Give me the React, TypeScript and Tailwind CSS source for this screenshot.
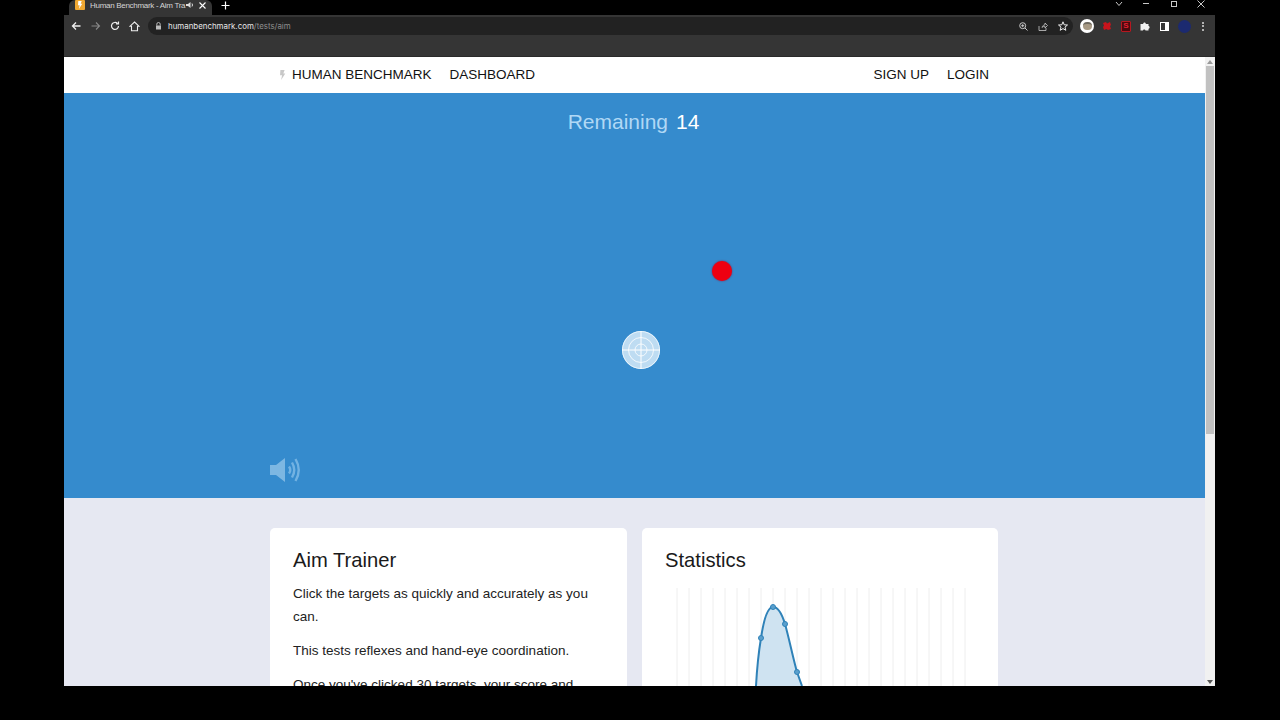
import React from "react";

const lines = Array.from({ length: 25 }, (_, i) => 23 + 12 * i);

function Target() {
  return (
    <svg width="40" height="40" viewBox="0 0 40 40" className="block">
      <circle cx="20" cy="20" r="19" fill="#bedcf2" />
      <circle cx="20" cy="20" r="18.500" fill="none" stroke="#e8f4fc" strokeWidth="1" />
      <circle cx="20" cy="20" r="12.500" fill="none" stroke="#ffffff" strokeOpacity="0.8" strokeWidth="1" />
      <circle cx="20" cy="20" r="6" fill="none" stroke="#ffffff" strokeOpacity="0.8" strokeWidth="1" />
      <path d="M1 20H39M20 1V39" stroke="#ffffff" strokeWidth="1" />
    </svg>
  );
}

function Chart() {
  return (
    <svg width="328" height="98" viewBox="0 0 328 98" className="block">
      {lines.map((x) => (
        <line key={x} x1={x} x2={x} y1="0" y2="98" stroke="#eeeeee" strokeWidth="1" />
      ))}
      <path d="M102 98 C103 80 105 62 107 50 C110 30 114 19 119 19 C124 19 128 26 131 36 C135 50 139 70 143 84 L148 98 Z" fill="#cfe3f1" />
      <path d="M102 98 C103 80 105 62 107 50 C110 30 114 19 119 19 C124 19 128 26 131 36 C135 50 139 70 143 84 L148 98" fill="none" stroke="#2f82b8" strokeWidth="2" />
      {[[107, 50], [119, 19], [131, 36], [143, 84]].map(([x, y]) => (
        <circle key={x} cx={x} cy={y} r="2.500" fill="#5a9fcd" stroke="#2f82b8" />
      ))}
    </svg>
  );
}

function Bolt({ className }: { className: string }) {
  return (
    <svg viewBox="0 0 10 14" className={className}>
      <path d="M2 0H8L6.200 5H9L3 14L4.400 7.500H1.500Z" fill="currentColor" />
    </svg>
  );
}

export default function App() {
  return (
    <div className="w-[1280px] h-[720px] bg-black pl-[64px] overflow-hidden font-['Liberation_Sans',Arial,sans-serif]">
      <div className="w-[1151px] h-[686px] flex flex-col overflow-hidden">
        {/* tab strip */}
        <div className="h-[15px] bg-black flex items-start shrink-0">
          <div className="ml-[5px] w-[143px] h-[15px] bg-[#353535] rounded-t-md flex items-start pl-[6px] pr-[4px]">
            <div className="w-[10px] h-[10px] shrink-0 bg-[#f0a832] rounded-[1px] flex items-center justify-center text-white">
              <Bolt className="w-[6px] h-[8px]" />
            </div>
            <span className="ml-[5px] w-[92px] shrink-0 text-[8px] tracking-[-0.3px] leading-[11px] text-[#d4d4d4] whitespace-nowrap">Human Benchmark - Aim Tra</span>
            <svg width="8" height="8" viewBox="0 0 8 8" className="mt-[1px] ml-[4px] shrink-0"><path d="M0 3H2L4.500 1V7L2 5H0Z" fill="#ddd" /><path d="M6 2.500Q7 4 6 5.500" stroke="#ddd" fill="none" /></svg>
            <svg width="7" height="7" viewBox="0 0 7 7" className="mt-[2px] ml-[5px] shrink-0"><path d="M0.500 0.500L6.500 6.500M6.500 0.500L0.500 6.500" stroke="#fff" strokeWidth="1.100" /></svg>
          </div>
          <svg width="9" height="9" viewBox="0 0 9 9" className="ml-[9px] mt-[1px]"><path d="M4.500 0.500V8.500M0.500 4.500H8.500" stroke="#fff" strokeWidth="1.200" /></svg>
          <div className="ml-auto mr-[10px] flex items-center text-[#c8c8c8] h-[7px]">
            <svg width="8" height="6" viewBox="0 0 8 6" className="mr-[20px]"><path d="M1 1L4 4.500L7 1" stroke="currentColor" fill="none" /></svg>
            <div className="w-[6px] h-px bg-current mr-[22px]"></div>
            <div className="w-[6px] h-[6px] border border-current mr-[20px]"></div>
            <svg width="8" height="8" viewBox="0 0 8 8"><path d="M0.500 0.500L7.500 7.500M7.500 0.500L0.500 7.500" stroke="currentColor" /></svg>
          </div>
        </div>
        {/* toolbar */}
        <div className="h-[22px] bg-[#353535] flex items-center shrink-0 pl-[7px] text-white">
          <svg width="10" height="10" viewBox="0 0 10 10"><path d="M9.500 5H1.500M5 1.500L1.500 5L5 8.500" stroke="#eee" strokeWidth="1.300" fill="none" /></svg>
          <svg width="10" height="10" viewBox="0 0 10 10" className="ml-[10px]"><path d="M0.500 5H8.500M5 1.500L8.500 5L5 8.500" stroke="#888" strokeWidth="1.100" fill="none" /></svg>
          <svg width="10" height="10" viewBox="0 0 10 10" className="ml-[9px]"><path d="M8.500 5A3.500 3.500 0 1 1 7.500 2.500M8.500 0.500V3H6" stroke="#eee" strokeWidth="1.200" fill="none" /></svg>
          <svg width="11" height="11" viewBox="0 0 11 11" className="ml-[9px]"><path d="M5.500 1L10 5.200H8.500V9.700H2.500V5.200H1Z" stroke="#eee" strokeWidth="1.100" fill="none" /></svg>
          <div className="ml-[8px] w-[925px] h-[18px] rounded-full bg-[#222222] flex items-center pl-[7px] pr-[5px]">
            <svg width="7" height="8" viewBox="0 0 7 8" className="mr-[6px]"><path d="M1.800 3.500V2.200A1.700 1.700 0 0 1 5.200 2.200V3.500" stroke="#bbb" fill="none" /><rect x="1" y="3.500" width="5" height="4" fill="#bbb" /></svg>
            <span className="mt-[1px] text-[7.900px] text-[#e8e8e8] font-['Inter',sans-serif]">humanbenchmark.com<span className="text-[#8f8f8f]">/tests/aim</span></span>
            <div className="ml-auto flex items-center gap-[10px] text-[#c8c8c8]">
              <svg width="9" height="9" viewBox="0 0 9 9"><circle cx="3.700" cy="3.700" r="3" stroke="currentColor" fill="none" /><path d="M6 6L8.500 8.500M2.200 3.700H5.200M3.700 2.200V5.200" stroke="currentColor" /></svg>
              <svg width="10" height="9" viewBox="0 0 10 9"><path d="M1 4V8.500H8V6M4 5.500C4.500 3.500 6 2.800 7 2.800V1L9.500 3.500L7 6V4.300C6 4.300 5 4.500 4 5.500Z" stroke="currentColor" strokeWidth="0.800" fill="none" /></svg>
              <svg width="10" height="10" viewBox="0 0 10 10"><path d="M5 0.800L6.200 3.800L9.500 4L7 6.100L7.800 9.300L5 7.600L2.200 9.300L3 6.100L0.500 4L3.800 3.800Z" stroke="#eee" fill="none" /></svg>
            </div>
          </div>
          <div className="ml-[7px] w-[14px] h-[14px] rounded-full bg-white flex items-center justify-center">
            <div className="w-[9px] h-[8px] rounded-full bg-[#a89a84] border-t-2 border-[#6f6a60]"></div>
          </div>
          <svg width="10" height="10" viewBox="0 0 10 10" className="ml-[8px]"><path d="M1 2L4 1L5 2.500L8 1L9 4L8 5L9 8L6 9L4.500 8L2 9L1 6L2 4.500Z" fill="#c8141c" /></svg>
          <div className="ml-[9px] w-[10px] h-[11px] rounded-[1px] bg-[#4a0a0e] border border-[#b51820] flex items-center justify-center text-[8px] leading-none text-[#e02030] font-bold">S</div>
          <svg width="10" height="10" viewBox="0 0 10 10" className="ml-[9px]"><path d="M0.500 3H3.200C3 1 6 1 5.800 3H8.500V5C10 5 10 7.800 8.500 7.800V9.500H5.500C5.500 8 3 8 3 9.500H0.500Z" fill="#f0f0f0" /></svg>
          <div className="ml-[10px] w-[9px] h-[9px] border-[1.500px] border-white flex justify-end"><div className="w-[3px] bg-white"></div></div>
          <div className="ml-[9px] w-[13px] h-[13px] rounded-full bg-[#1c2a70]"></div>
          <div className="ml-[11px] flex flex-col gap-[1.500px]">
            <div className="w-[2px] h-[2px] rounded-full bg-[#ddd]"></div>
            <div className="w-[2px] h-[2px] rounded-full bg-[#ddd]"></div>
            <div className="w-[2px] h-[2px] rounded-full bg-[#ddd]"></div>
          </div>
        </div>
        {/* bookmarks gap */}
        <div className="h-[20px] bg-[#353535] border-b border-[#2a2a2a] shrink-0"></div>

        <div className="flex flex-1 min-h-0">
          <main className="flex-1 min-w-0 overflow-hidden bg-[#e6e8f2]">
            <nav className="h-[36px] bg-white flex items-center text-[13.500px] text-[#111] pl-[215px] pr-[216px]">
              <Bolt className="w-[7px] h-[10px] text-[#c8c8c8] mr-[6px]" />
              <span>HUMAN BENCHMARK</span>
              <span className="ml-[18px]">DASHBOARD</span>
              <span className="ml-auto">SIGN UP</span>
              <span className="ml-[18px]">LOGIN</span>
            </nav>
            <section className="h-[405px] bg-[#358bcd] relative">
              <div className="pt-[14px] flex justify-center gap-[8px] text-[21px] leading-[30px] pr-[2px]">
                <span className="text-[#b0d8f5]">Remaining</span>
                <span className="text-white">14</span>
              </div>
              <div className="absolute left-[648px] top-[168px] w-[20px] h-[20px] rounded-full bg-[#ee0011] shadow-[0_0_2px_#7a2050]"></div>
              <div className="absolute left-[557px] top-[237px]"><Target /></div>
              <svg width="32" height="26" viewBox="0 0 32 26" className="absolute left-[206px] top-[364px]">
                <path d="M0 8H6L15 1V25L6 18H0Z" fill="#7db7e2" />
                <path d="M19 9.500Q21.500 13 19 16.500M22 5.500Q26.500 13 22 20.500M25.500 2Q32 13 25.500 24" fill="none" stroke="#72b2e2" strokeWidth="2.400" />
              </svg>
            </section>
            <div className="flex gap-[15px] pt-[30px] pl-[206px]">
              <article className="w-[357px] h-[300px] shrink-0 bg-white rounded-[5px] px-[23px] pt-[20px]">
                <h2 className="text-[20.200px] leading-[25px] text-[#1a1a1a]">Aim Trainer</h2>
                <p className="mt-[9px] text-[13.500px] leading-[23px] text-[#222]">Click the targets as quickly and accurately as you can.</p>
                <p className="mt-[11px] text-[13.500px] leading-[23px] text-[#222]">This tests reflexes and hand-eye coordination.</p>
                <p className="mt-[11px] text-[13.500px] leading-[23px] text-[#222]">Once you've clicked 30 targets, your score and average time per target will be displayed.</p>
              </article>
              <article className="w-[356px] h-[300px] shrink-0 bg-white rounded-[5px] pl-[23px] pt-[20px]">
                <h2 className="text-[20.200px] leading-[25px] text-[#1a1a1a]">Statistics</h2>
                <div className="-ml-[11px] mt-[15px]"><Chart /></div>
              </article>
            </div>
          </main>
          <aside className="w-[10px] bg-[#f1f1f1] flex flex-col items-center shrink-0">
            <div className="h-[9px] flex items-center text-[#999]"><svg width="6" height="4" viewBox="0 0 6 4"><path d="M3 0L6 4H0Z" fill="currentColor" /></svg></div>
            <div className="w-[8px] h-[368px] bg-[#c1c1c1]"></div>
            <div className="mt-auto h-[9px] flex items-center text-[#555]"><svg width="6" height="4" viewBox="0 0 6 4"><path d="M3 4L6 0H0Z" fill="currentColor" /></svg></div>
          </aside>
        </div>
      </div>
    </div>
  );
}
